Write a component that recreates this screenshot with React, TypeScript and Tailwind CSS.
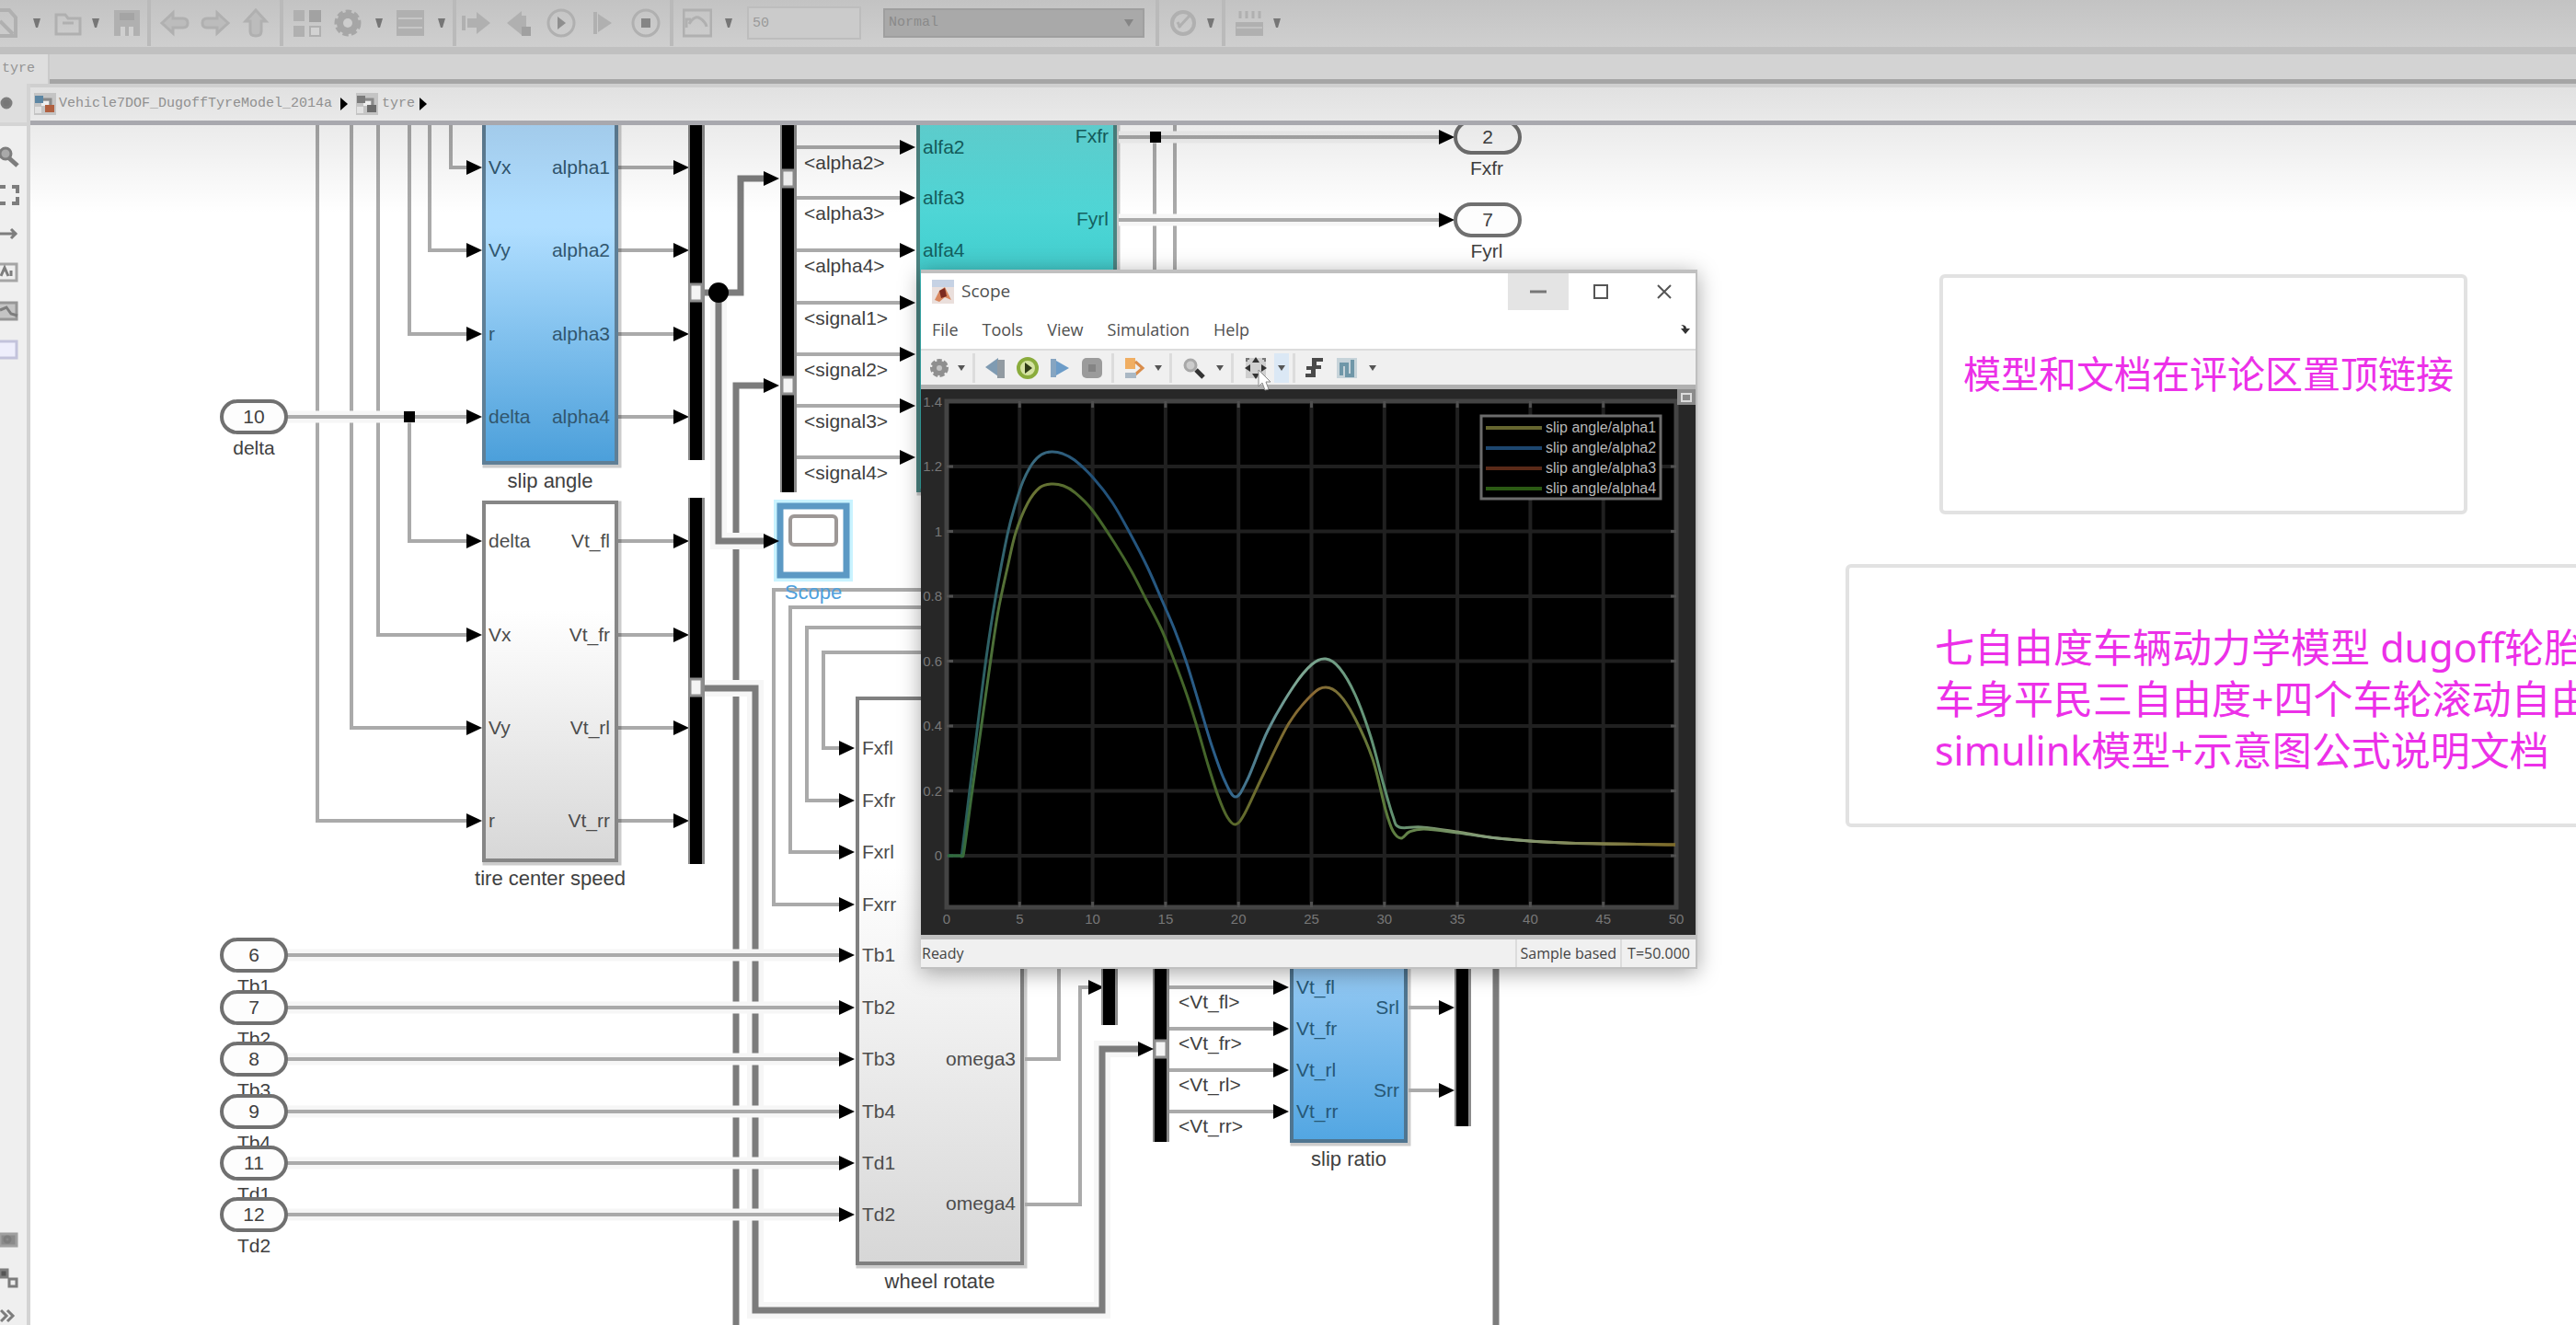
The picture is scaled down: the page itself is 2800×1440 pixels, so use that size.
import { useState } from "react";
import type { ReactNode } from "react";

type Point = [number, number];

type WireProps = {
  d: string;
  bus?: boolean;
  halo?: boolean;
};

type BlockProps = {
  x: number;
  y: number;
  w: number;
  h: number;
  fill: string;
  border: string;
  ink: string;
  label?: string;
  inputs: [string, number][];
  outputs: [string, number][];
};

/* ---------- toolbar ---------- */

const glyphs: Record<string, ReactNode> = {
  page: (
    <>
      <path d="M8 2h12l7 8v20H8z" fill="none" stroke="currentColor" strokeWidth="4" />
      <path d="M10 14l14 14" stroke="currentColor" strokeWidth="4" />
    </>
  ),
  open: <path d="M3 7h10l3 4h13v17H3zM10 16h12" fill="none" stroke="currentColor" strokeWidth="3" />,
  save: (
    <>
      <path d="M2 2h28v28H2z" fill="currentColor" />
      <path d="M9 20h5v10H9zM18 20h5v10h-5z" fill="#cfcfcf" />
      <path d="M8 5h16v8H8z" fill="#a4a4a4" />
    </>
  ),
  back: <path d="M2 16L14 5v6h11q5 0 5 5t-5 5H14v6z" fill="#bcbcbc" stroke="currentColor" strokeWidth="3" />,
  forward: <path d="M30 16L18 5v6H7q-5 0-5 5t5 5h11v6z" fill="#bcbcbc" stroke="currentColor" strokeWidth="3" />,
  up: <path d="M16 2L27 14h-5v11q0 5-6 5t-6-5V14H5z" fill="#bcbcbc" stroke="currentColor" strokeWidth="3" />,
  library: (
    <>
      <path d="M1 2h12v12H1zM1 19h12v12H1z" fill="currentColor" />
      <path d="M18 2h13v13H18z" fill="#a2a2a2" />
      <path d="M19 20h11v10H19z" fill="#d2d2d2" stroke="currentColor" strokeWidth="2" />
    </>
  ),
  gear: (
    <>
      <circle cx="16" cy="16" r="12" fill="#a6a6a6" stroke="#a6a6a6" strokeWidth="5" strokeDasharray="6 3" />
      <circle cx="16" cy="16" r="5" fill="#cdcdcd" />
    </>
  ),
  list: (
    <>
      <path d="M1 2h30v28H1z" fill="currentColor" />
      <path d="M3 11h26M3 21h26" stroke="#c6c6c6" strokeWidth="2" />
    </>
  ),
  stepInto: (
    <>
      <path d="M0 8h4v16H0z" fill="currentColor" />
      <path d="M6 11h10V4l15 12-15 12v-7H6z" fill="currentColor" />
    </>
  ),
  stepBack: (
    <>
      <path d="M3 16L19 3v26z" fill="currentColor" />
      <path d="M19 8h5v20h-5z" fill="currentColor" />
      <path d="M19 20h10v10H19z" fill="#a0a0a0" />
    </>
  ),
  run: (
    <>
      <circle cx="16" cy="16" r="14" fill="none" stroke="currentColor" strokeWidth="3" />
      <path d="M12 9l9 7-9 7z" fill="#8e8e8e" />
    </>
  ),
  stepNext: (
    <>
      <path d="M5 4h4v24H5z" fill="currentColor" />
      <path d="M10 6l15 10-15 10z" fill="currentColor" />
    </>
  ),
  stop: (
    <>
      <circle cx="16" cy="16" r="14" fill="none" stroke="currentColor" strokeWidth="3" />
      <path d="M11 11h10v10H11z" fill="#858585" />
    </>
  ),
  graph: (
    <>
      <path d="M1 2h30v28H1z" fill="none" stroke="currentColor" strokeWidth="3" />
      <path d="M4 21V12h5M7 17q6-10 12-6t7 9" fill="none" stroke="currentColor" strokeWidth="3" />
    </>
  ),
  check: (
    <>
      <circle cx="16" cy="16" r="12" fill="none" stroke="currentColor" strokeWidth="4" />
      <path d="M11 21L23 8M10 15l3 6" fill="none" stroke="currentColor" strokeWidth="3" />
    </>
  ),
  schedule: (
    <>
      <path d="M1 15h30v15H1z" fill="currentColor" />
      <path d="M6 3v8M13 3v8M20 3v8M27 3v8" stroke="currentColor" strokeWidth="3" />
      <path d="M2 21h28" stroke="#c2c2c2" strokeWidth="2" />
    </>
  ),
};

function ToolButton({ name }: { name: string }) {
  return (
    <button type="button" aria-label={name} className="flex h-8 w-9 shrink-0 items-center justify-center text-[#b0b0b0]">
      <svg viewBox="0 0 32 32" className="size-8">
        {glyphs[name]}
      </svg>
    </button>
  );
}

function Caret({ tight = false }: { tight?: boolean }) {
  return (
    <button
      type="button"
      aria-label="More"
      className={tight ? "-ml-1 flex w-4 shrink-0 justify-center" : "flex w-4 shrink-0 justify-center"}
    >
      <svg viewBox="0 0 8 10" className="h-[10px] w-2">
        <path d="M0 0h8L5 10H3z" fill="#767676" />
      </svg>
    </button>
  );
}

function Divider({ className = "" }: { className?: string }) {
  return <span className={`h-[50px] w-1 shrink-0 bg-[#bababa] ${className}`} />;
}

function MainToolbar() {
  const [stopTime, setStopTime] = useState("50");
  return (
    <div className="flex h-[59px] items-start border-b-8 border-[#c0c0c0] bg-linear-to-b from-[#c3c3c3] to-[#cfcfcf]">
      <div className="-ml-3 flex h-[50px] items-center gap-2">
        <ToolButton name="page" />
        <Caret />
        <ToolButton name="open" />
        <Caret tight />
        <ToolButton name="save" />
        <Divider className="-ml-1" />
        <ToolButton name="back" />
        <ToolButton name="forward" />
        <ToolButton name="up" />
        <Divider />
        <ToolButton name="library" />
        <ToolButton name="gear" />
        <Caret />
        <ToolButton name="list" />
        <Caret />
        <Divider className="-mx-1" />
        <div className="flex gap-[10px]">
          <ToolButton name="stepInto" />
          <ToolButton name="stepBack" />
          <ToolButton name="run" />
          <ToolButton name="stepNext" />
          <ToolButton name="stop" />
        </div>
        <Divider />
        <ToolButton name="graph" />
        <Caret />
        <input
          aria-label="Stop time"
          value={stopTime}
          onChange={(e) => setStopTime(e.target.value)}
          className="ml-1 h-9 w-[124px] border-2 border-[#bdbdbd] bg-[#cbcbcb] px-1 font-['Liberation_Mono',monospace] text-[15px] text-[#999999]"
        />
        <div className="relative ml-4 h-8 w-[284px]">
          <select
            aria-label="Simulation mode"
            className="h-full w-full appearance-none border-2 border-[#9f9f9f] bg-[#a9a9a9] px-1 font-['Liberation_Mono',monospace] text-[15px] text-[#8a8a8a]"
          >
            <option>Normal</option>
          </select>
          <svg viewBox="0 0 10 12" className="pointer-events-none absolute top-[10px] right-3 h-3 w-[10px]">
            <path d="M0 2h10L5 10z" fill="#858585" />
          </svg>
        </div>
        <Divider className="ml-1" />
        <ToolButton name="check" />
        <Caret tight />
        <Divider className="-ml-1" />
        <ToolButton name="schedule" />
        <Caret tight />
      </div>
    </div>
  );
}

function ModelIcon({ colored = false }: { colored?: boolean }) {
  return (
    <svg viewBox="0 0 24 24" className="size-6 shrink-0">
      <path d="M0 0h24v24H0z" fill="#c4c4c4" />
      <path d="M8 9h8v5H8z" fill="#eeeeee" />
      <path d="M1 3h9v8H1z" fill={colored ? "#5c86a3" : "#7b7b7b"} />
      <path d="M10 7h8v6" fill="none" stroke="#8a8a8a" strokeWidth="3" />
      <path d="M12 13h10v8H12z" fill={colored ? "#b06040" : "#6c6c6c"} />
      <path d="M1 15h7v7H1z" fill="#e2e2e2" />
    </svg>
  );
}

function Breadcrumb() {
  return (
    <nav className="flex h-9 items-center bg-linear-to-b from-[#e1e1e1] to-[#e9e9e9] pl-1 font-['Liberation_Mono',monospace] text-[15px] text-[#909090]">
      <ModelIcon colored />
      <a href="#model" className="ml-[3px]">Vehicle7DOF_DugoffTyreModel_2014a</a>
      <svg viewBox="0 0 10 14" className="mx-2 h-[14px] w-[10px]">
        <path d="M1 0l8 7-8 7z" />
      </svg>
      <ModelIcon />
      <a href="#tyre" className="ml-1">tyre</a>
      <svg viewBox="0 0 10 14" className="ml-1 h-[14px] w-[10px]">
        <path d="M1 0l8 7-8 7z" />
      </svg>
    </nav>
  );
}

/* ---------- left palette ---------- */

function PaletteButton({ label, children }: { label: string; children: ReactNode }) {
  return (
    <button type="button" aria-label={label} className="flex h-[42px] w-full items-center">
      <svg viewBox="0 0 22 24" className="h-6 w-[22px]" fill="none" stroke="#7d7d7d" strokeWidth="3">
        {children}
      </svg>
    </button>
  );
}

function Palette() {
  return (
    <aside className="flex w-[33px] shrink-0 flex-col justify-between border-r-4 border-[#d3d3d3] bg-[#efefef]">
      <div>
        <div className="border-b-4 border-[#d4d4d4] bg-[#dedede]">
          <PaletteButton label="Hide browser">
            <circle cx="7" cy="12" r="5" fill="#777777" />
          </PaletteButton>
        </div>
        <div className="pt-3">
          <PaletteButton label="Zoom">
            <circle cx="6" cy="9" r="6" fill="#a9a9a9" />
            <path d="M10 14l9 8" strokeWidth="5" />
          </PaletteButton>
          <PaletteButton label="Fit to view">
            <path d="M0 3h6M13 3h6v7M19 14v7h-6M6 21H0" strokeWidth="4" />
          </PaletteButton>
          <PaletteButton label="Signal">
            <path d="M0 12h18M12 7l5 5-5 5" />
          </PaletteButton>
          <PaletteButton label="Annotation">
            <path d="M0 3h18v18H0" stroke="#a5a5a5" />
            <path d="M1 16l4-9 4 9M12 16v-6" />
          </PaletteButton>
          <PaletteButton label="Image">
            <path d="M0 3h18v18H0" stroke="#969696" fill="#c4c4c4" />
            <path d="M0 11l7-3 5 7 7 2" />
          </PaletteButton>
          <PaletteButton label="Area">
            <path d="M0 3h18v18H0" stroke="#c3c3dc" fill="#eeeefc" />
          </PaletteButton>
        </div>
      </div>
      <div className="-mb-3">
        <PaletteButton label="Camera">
          <path d="M0 6h18v13H0z" fill="#8a8a8a" stroke="#a0a0a0" />
          <circle cx="8" cy="12" r="3" />
        </PaletteButton>
        <PaletteButton label="Model data">
          <path d="M0 3h8v8H0z" fill="#555555" />
          <path d="M10 13h8v8h-8z" />
        </PaletteButton>
        <PaletteButton label="Expand">
          <path d="M1 5l6 6-6 6M8 5l6 6-6 6" />
        </PaletteButton>
      </div>
    </aside>
  );
}

/* ---------- block diagram ---------- */

function Wire({ d, bus = false, halo = false }: WireProps) {
  return (
    <>
      {halo && <path d={d} fill="none" stroke="#f6f6f6" strokeWidth={bus ? 18 : 13} />}
      <path d={d} fill="none" stroke={bus ? "#7c7c7c" : "#aaaaaa"} strokeWidth={bus ? 7 : 4} />
    </>
  );
}

function Arrow({ x, y }: { x: number; y: number }) {
  return <path d={`M${x - 17} ${y - 8}L${x} ${y}L${x - 17} ${y + 8}z`} fill="#000" />;
}

function Label({ x, y, text, anchor = "middle", fill = "#404040", size = 21 }: {
  x: number;
  y: number;
  text: string;
  anchor?: "start" | "middle" | "end";
  fill?: string;
  size?: number;
}) {
  return (
    <text x={x} y={y + 7} textAnchor={anchor} fill={fill} fontSize={size}>
      {text}
    </text>
  );
}

function Bar({ x, y, h, port }: { x: number; y: number; h: number; port?: number[] }) {
  return (
    <>
      <rect x={x - 2} y={y} width="18" height={h} fill="#8a8a8a" />
      <rect x={x} y={y} width="13" height={h} fill="#000" />
      {port?.map((p) => (
        <rect key={p} x={x} y={p - 9} width="13" height="18" fill="#f4f4f4" stroke="#8d8d8d" strokeWidth="3" />
      ))}
    </>
  );
}

function Block({ x, y, w, h, fill, border, ink, label, inputs, outputs }: BlockProps) {
  return (
    <g>
      <rect x={x + 2} y={y + 2} width={w} height={h} fill="none" stroke="#00000033" strokeWidth="7" />
      <rect x={x} y={y} width={w} height={h} fill={fill} stroke={border} strokeWidth="4" />
      {inputs.map(([text, py]) => (
        <Label key={text} x={x + 5} y={py} text={text} anchor="start" fill={ink} />
      ))}
      {outputs.map(([text, py]) => (
        <Label key={text} x={x + w - 7} y={py} text={text} anchor="end" fill={ink} />
      ))}
      {label && <Label x={x + w / 2} y={y + h + 20} text={label} size={22} />}
    </g>
  );
}

function Port({ x, y, id }: { x: number; y: number; id: string }) {
  return (
    <>
      <rect x={x} y={y - 17} width="70" height="34" rx="17" fill="#fdfdfd" stroke="#707070" strokeWidth="4" />
      <Label x={x + 35} y={y} text={id} />
    </>
  );
}

const torqueInputs: [string, string, number][] = [
  ["6", "Tb1", 1038],
  ["7", "Tb2", 1095],
  ["8", "Tb3", 1151],
  ["9", "Tb4", 1208],
  ["11", "Td1", 1264],
  ["12", "Td2", 1320],
];

const busSignals: [string, number][] = [
  ["<alpha2>", 160],
  ["<alpha3>", 215],
  ["<alpha4>", 272],
  ["<signal1>", 329],
  ["<signal2>", 385],
  ["<signal3>", 441],
  ["<signal4>", 497],
];

const speedSignals: [string, number][] = [
  ["<Vt_fl>", 1073],
  ["<Vt_fr>", 1118],
  ["<Vt_rl>", 1163],
  ["<Vt_rr>", 1208],
];

function Diagram() {
  return (
    <svg className="absolute inset-0 h-full w-full font-['Liberation_Sans',Arial,sans-serif]">
      <defs>
        <linearGradient id="blueTall" x1="0" y1="0" x2="0" y2="1">
          <stop offset="0" stopColor="#b0dcff" />
          <stop offset="0.35" stopColor="#b0deff" />
          <stop offset="1" stopColor="#4b9fda" />
        </linearGradient>
        <linearGradient id="blueShort" x1="0" y1="0" x2="0" y2="1">
          <stop offset="0" stopColor="#9ccdf5" />
          <stop offset="1" stopColor="#52a6e2" />
        </linearGradient>
        <linearGradient id="teal" x1="0" y1="0" x2="0" y2="1">
          <stop offset="0" stopColor="#6adfdf" />
          <stop offset="0.35" stopColor="#48d3d3" />
          <stop offset="0.5" stopColor="#3fc2c2" />
          <stop offset="1" stopColor="#35a8a4" />
        </linearGradient>
        <linearGradient id="gray" x1="0" y1="0" x2="0" y2="1">
          <stop offset="0.3" stopColor="#ffffff" />
          <stop offset="1" stopColor="#d7d7d7" />
        </linearGradient>
      </defs>

      {/* model coordinates start at the window corner */}
      <g transform="translate(-33 -136)">
        <Wire bus d="M800 1445V419H832" />
        <Wire bus halo d="M762 748H821V1424H1198V1140H1240" />
        <Wire bus halo d="M781 318V588H832" />
        <Wire bus d="M762 318H805V194H832" />
        <circle cx="781" cy="318" r="11" />
        <Wire bus d="M1626 1040V1445" />

        <Wire d="M345 130V892H510" />
        <Wire d="M382 130V791H510" />
        <Wire d="M411 130V690H510" />
        <Wire d="M445 130V363H510" />
        <Wire d="M467 130V272H510" />
        <Wire d="M490 130V182H510" />
        <Wire d="M445 453V588H510" />
        <Wire halo d="M311 453H510" />
        <rect x="439" y="447" width="12" height="12" />
        {[182, 272, 363, 453, 588, 690, 791, 892].map((y) => (
          <g key={y}>
            <Arrow x={524} y={y} />
            <Wire d={`M671 ${y}H740`} />
            <Arrow x={749} y={y} />
          </g>
        ))}

        <Wire d="M1001 641H841V983H915" />
        <Wire d="M1001 660H859V926H915" />
        <Wire d="M1001 682H877V870H915" />
        <Wire d="M1001 709H895V813H915" />
        {[813, 870, 926, 983].map((y) => (
          <Arrow key={y} x={929} y={y} />
        ))}
        {torqueInputs.map(([id, name, y]) => (
          <g key={id}>
            <Wire halo d={`M311 ${y}H915`} />
            <Arrow x={929} y={y} />
            <Label x={276} y={y + 34} text={name} />
          </g>
        ))}
        {torqueInputs.map(([id, , y]) => (
          <Port key={id} x={241} y={y} id={id} />
        ))}
        <Port x={241} y={453} id="10" />
        <Label x={276} y={487} text="delta" />

        <Bar x={750} y={120} h={380} port={[318]} />
        <Bar x={750} y={541} h={398} port={[747]} />
        <Bar x={850} y={120} h={415} port={[194, 419]} />
        <Arrow x={847} y={194} />
        <Arrow x={847} y={419} />
        {busSignals.map(([name, y]) => (
          <g key={name}>
            <Wire d={`M866 ${y}H984`} />
            <Arrow x={995} y={y} />
            <Label x={874} y={y + 17} text={name} anchor="start" />
          </g>
        ))}

        <Block
          x={526} y={110} w={144} h={393} fill="url(#blueTall)" border="#5f7f96" ink="#31566e" label="slip angle"
          inputs={[["Vx", 182], ["Vy", 272], ["r", 363], ["delta", 453]]}
          outputs={[["alpha1", 182], ["alpha2", 272], ["alpha3", 363], ["alpha4", 453]]}
        />
        <Block
          x={526} y={546} w={144} h={389} fill="url(#gray)" border="#868686" ink="#4c4c4c" label="tire center speed"
          inputs={[["delta", 588], ["Vx", 690], ["Vy", 791], ["r", 892]]}
          outputs={[["Vt_fl", 588], ["Vt_fr", 690], ["Vt_rl", 791], ["Vt_rr", 892]]}
        />
        <Block
          x={998} y={110} w={214} h={423} fill="url(#teal)" border="#4c8482" ink="#14605f"
          inputs={[["alfa2", 160], ["alfa3", 215], ["alfa4", 272]]}
          outputs={[["Fxfr", 148], ["Fyrl", 238]]}
        />
        <Block
          x={932} y={759} w={179} h={614} fill="url(#gray)" border="#808080" ink="#4c4c4c" label="wheel rotate"
          inputs={[
            ["Fxfl", 813], ["Fxfr", 870], ["Fxrl", 926], ["Fxrr", 983], ["Tb1", 1038],
            ["Tb2", 1095], ["Tb3", 1151], ["Tb4", 1208], ["Td1", 1264], ["Td2", 1320],
          ]}
          outputs={[["omega3", 1151], ["omega4", 1308]]}
        />

        {/* selected scope block */}
        <rect x="848" y="550" width="72" height="75" fill="#fff" stroke="#c9f3ff" strokeWidth="14" />
        <rect x="848" y="550" width="72" height="75" fill="#fff" stroke="#5c99c4" strokeWidth="7" />
        <rect x="859" y="561" width="50" height="31" rx="4" fill="#fff" stroke="#9d9896" strokeWidth="4" />
        <Label x={884} y={644} text="Scope" fill="#4fa0dc" size={22} />
        <Arrow x={847} y={588} />

        <Wire d="M1255 149V300" />
        <Wire d="M1277 130V300" />
        <Wire halo d="M1216 149H1568" />
        <Wire halo d="M1216 239H1568" />
        <rect x="1250" y="143" width="12" height="12" />
        <Arrow x={1581} y={149} />
        <Arrow x={1581} y={239} />
        <Port x={1582} y={149} id="2" />
        <Port x={1582} y={239} id="7" />
        <Label x={1616} y={183} text="Fxfr" />
        <Label x={1616} y={273} text="Fyrl" />

        <Wire d="M1114 1151H1151V1040" />
        <Wire d="M1114 1309H1174V1073H1184" />
        <Arrow x={1200} y={1073} />
        <Bar x={1199} y={1040} h={74} />
        <Bar x={1255} y={1040} h={201} port={[1140]} />
        <Arrow x={1254} y={1140} />
        {speedSignals.map(([name, y]) => (
          <g key={name}>
            <Wire d={`M1271 ${y}H1388`} />
            <Arrow x={1401} y={y} />
            <Label x={1281} y={y + 16} text={name} anchor="start" />
          </g>
        ))}
        <Block
          x={1404} y={1030} w={124} h={210} fill="url(#blueShort)" border="#4f7590" ink="#275775" label="slip ratio"
          inputs={[["Vt_fl", 1073], ["Vt_fr", 1118], ["Vt_rl", 1163], ["Vt_rr", 1208]]}
          outputs={[["Srl", 1095], ["Srr", 1185]]}
        />
        <Wire d="M1531 1095H1568" />
        <Wire d="M1531 1185H1568" />
        <Arrow x={1581} y={1095} />
        <Arrow x={1581} y={1185} />
        <Bar x={1583} y={1040} h={184} />
      </g>
    </svg>
  );
}

/* ---------- scope window ---------- */

const frontCurve: Point[] = [
  [1030, 931], [1045, 931], [1046, 925], [1054, 860], [1062, 795], [1072, 716], [1082, 651], [1095, 582], [1104, 548],
  [1112, 524], [1122, 505], [1132, 495], [1143, 492], [1155, 494], [1168, 501], [1188, 520], [1209, 547], [1229, 582],
  [1247, 617], [1262, 651], [1277, 686], [1290, 722], [1304, 768], [1317, 811], [1331, 849], [1343, 867], [1356, 848],
  [1378, 795], [1406, 747], [1426, 723], [1441, 717], [1456, 727], [1473, 756], [1490, 802], [1504, 854], [1514, 888],
  [1521, 900], [1545, 900], [1584, 905], [1628, 912], [1700, 917], [1821, 919],
];

const rearCurve: Point[] = [
  [1030, 931], [1046, 931], [1048, 925], [1056, 866], [1066, 795], [1076, 724], [1085, 665], [1095, 618], [1104, 580],
  [1117, 548], [1130, 531], [1143, 527], [1156, 529], [1168, 536], [1187, 555], [1212, 592], [1230, 622], [1245, 651],
  [1262, 684], [1276, 718], [1290, 756], [1302, 794], [1313, 832], [1324, 866], [1334, 889], [1343, 897], [1353, 885],
  [1373, 843], [1401, 787], [1426, 756], [1441, 748], [1456, 756], [1473, 782], [1492, 826], [1506, 881], [1514, 904],
  [1523, 912], [1532, 905], [1548, 902], [1584, 906], [1628, 912], [1700, 917], [1821, 919],
];

function smooth(points: Point[]) {
  let d = `M${points[0][0]} ${points[0][1]}L${points[1][0]} ${points[1][1]}`;
  for (let i = 1; i < points.length - 1; i++) {
    const a = points[i === 1 ? 1 : i - 1];
    const b = points[i];
    const c = points[i + 1];
    const e = points[Math.min(i + 2, points.length - 1)];
    d += `C${b[0] + (c[0] - a[0]) / 6} ${b[1] + (c[1] - a[1]) / 6} ${c[0] - (e[0] - b[0]) / 6} ${c[1] - (e[1] - b[1]) / 6} ${c[0]} ${c[1]}`;
  }
  return d;
}

const xTicks = [0, 5, 10, 15, 20, 25, 30, 35, 40, 45, 50];
const yTicks = ["0", "0.2", "0.4", "0.6", "0.8", "1", "1.2", "1.4"];

const legend = [
  { name: "slip angle/alpha1", color: "#66662f" },
  { name: "slip angle/alpha2", color: "#1d4770" },
  { name: "slip angle/alpha3", color: "#5a2a18" },
  { name: "slip angle/alpha4", color: "#2b5a14" },
];

function ScopePlot() {
  return (
    <svg viewBox="1001 424 842 593" className="block w-full bg-[#272727] font-['Liberation_Sans',Arial,sans-serif]">
      <defs>
        <linearGradient id="front" gradientUnits="userSpaceOnUse" x1="1030" y1="0" x2="1821" y2="0">
          <stop offset="0" stopColor="#24584e" />
          <stop offset="0.12" stopColor="#3a6a80" />
          <stop offset="0.2" stopColor="#215078" />
          <stop offset="0.38" stopColor="#2c5f8a" />
          <stop offset="0.48" stopColor="#7fa894" />
          <stop offset="0.6" stopColor="#5d8f70" />
          <stop offset="0.7" stopColor="#8a9a72" />
          <stop offset="1" stopColor="#a08a3c" />
        </linearGradient>
        <linearGradient id="rear" gradientUnits="userSpaceOnUse" x1="1030" y1="0" x2="1821" y2="0">
          <stop offset="0" stopColor="#2c6a3c" />
          <stop offset="0.12" stopColor="#6b7434" />
          <stop offset="0.2" stopColor="#44652a" />
          <stop offset="0.36" stopColor="#44652a" />
          <stop offset="0.42" stopColor="#6c6c2e" />
          <stop offset="0.5" stopColor="#8c6a34" />
          <stop offset="0.6" stopColor="#5a7a3a" />
          <stop offset="0.75" stopColor="#86a080" />
          <stop offset="1" stopColor="#7c6a28" />
        </linearGradient>
      </defs>
      <rect x="1029" y="437" width="793" height="550" fill="#000" stroke="#444" strokeWidth="5" />
      <g stroke="#202020" strokeWidth="4">
        {xTicks.slice(1, -1).map((t) => (
          <path key={t} d={`M${1029 + t * 15.86} 440V985`} />
        ))}
        {yTicks.slice(0, -1).map((t, i) => (
          <path key={t} d={`M1032 ${931 - i * 70.5}H1819`} />
        ))}
      </g>
      <g stroke="#505050" strokeWidth="3">
        {xTicks.slice(1, -1).map((t) => (
          <path key={t} d={`M${1029 + t * 15.86} 437v7m0 537v6`} />
        ))}
        {yTicks.slice(0, -1).map((t, i) => (
          <path key={t} d={`M1029 ${931 - i * 70.5}h7m780 0h6`} />
        ))}
      </g>
      <path d={smooth(frontCurve)} fill="none" stroke="url(#front)" strokeWidth="3" />
      <path d={smooth(rearCurve)} fill="none" stroke="url(#rear)" strokeWidth="3" />
      <g fill="#777" fontSize="15">
        {xTicks.map((t) => (
          <text key={t} x={1029 + t * 15.86} y="1005" textAnchor="middle">
            {t}
          </text>
        ))}
        {yTicks.map((t, i) => (
          <text key={t} x="1024" y={936 - i * 70.5} textAnchor="end">
            {t}
          </text>
        ))}
      </g>
      <rect x="1610" y="453" width="195" height="90" fill="#000" stroke="#6c6c6c" strokeWidth="3" />
      {legend.map((item, i) => (
        <g key={item.name}>
          <path d={`M1615 ${466 + i * 22}h61`} stroke={item.color} strokeWidth="4" />
          <text x="1680" y={471 + i * 22} fontSize="16" fill="#b8b8b8">
            {item.name}
          </text>
        </g>
      ))}
      <path d="M1823 424h20v17h-20z" fill="#8b8b8b" />
      <path d="M1828 429h10v8h-10z" fill="none" stroke="#ddd" strokeWidth="2" />
    </svg>
  );
}

function ScopeTool({ label, children, width = "w-8" }: { label: string; children: ReactNode; width?: string }) {
  return (
    <button type="button" aria-label={label} className={`flex shrink-0 justify-center ${width}`}>
      <svg viewBox="0 0 24 24" className="size-6">
        {children}
      </svg>
    </button>
  );
}

function ScopeCaret({ active = false }: { active?: boolean }) {
  return (
    <button
      type="button"
      aria-label="More"
      className={
        active
          ? "flex h-8 w-4 shrink-0 items-center justify-center bg-[#dbe8f5]"
          : "flex h-8 w-4 shrink-0 items-center justify-center"
      }
    >
      <svg viewBox="0 0 8 6" className="h-[6px] w-2">
        <path d="M0 0h8L4 6z" fill="#555" />
      </svg>
    </button>
  );
}

function ScopeDivider() {
  return <span className="mx-1 h-8 w-[3px] shrink-0 bg-[#dcdcdc]" />;
}

function ScopeWindow() {
  return (
    <section
      aria-label="Scope"
      className="absolute top-[157px] left-[968px] w-[844px] border-t-4 border-r-2 border-b-2 border-[#c0c0c0] bg-white font-['Open_Sans','Noto_Sans',sans-serif] text-lg text-[#505050] shadow-[0_4px_22px_rgba(0,0,0,0.35)]"
    >
      <header className="flex h-10 items-center pl-3">
        <svg viewBox="0 0 24 26" className="h-[26px] w-6">
          <path d="M0 0h24v26H0z" fill="#eadfdc" />
          <path d="M0 0h24v8H0z" fill="#c6d2e4" />
          <path d="M3 22l5-10 6-4 7 14-7-3-6 5z" fill="#d9875f" />
          <path d="M8 12l6-3 2 9-6 2z" fill="#7c2a20" />
        </svg>
        <h2 className="ml-2 text-[19px]">Scope</h2>
        <div className="ml-auto flex h-full">
          <button type="button" aria-label="Minimize" className="flex w-[66px] items-center justify-center bg-[#e4e4e4]">
            <svg viewBox="0 0 18 18" className="size-[18px]">
              <path d="M0 9h18" stroke="#777" strokeWidth="3" />
            </svg>
          </button>
          <button type="button" aria-label="Maximize" className="flex w-[70px] items-center justify-center">
            <svg viewBox="0 0 18 18" className="size-[18px]">
              <path d="M2 2h14v14H2z" fill="none" stroke="#555" strokeWidth="2" />
            </svg>
          </button>
          <button type="button" aria-label="Close" className="flex w-[68px] items-center justify-center">
            <svg viewBox="0 0 18 18" className="size-[18px]">
              <path d="M2 2l14 14M16 2L2 16" stroke="#555" strokeWidth="2" />
            </svg>
          </button>
        </div>
      </header>

      <nav className="flex h-[42px] items-center gap-[26px] pl-3">
        <button type="button">File</button>
        <button type="button">Tools</button>
        <button type="button">View</button>
        <button type="button">Simulation</button>
        <button type="button">Help</button>
        <svg viewBox="0 0 12 12" className="mr-[5px] ml-auto size-3">
          <path d="M1 1q6 0 6 4h4l-5 6-5-6h3q0-3-3-4z" fill="#333" />
        </svg>
      </nav>

      <div className="flex h-11 items-center border-t-2 border-b-[5px] border-t-[#dcdcdc] border-b-[#b0b0b0] bg-[#f0f0f0] pl-1">
        <ScopeTool label="Settings">
          <circle cx="12" cy="12" r="8" fill="#8f8f8f" stroke="#8f8f8f" strokeWidth="4" strokeDasharray="5 2" />
          <circle cx="12" cy="12" r="3" fill="#c4c4c4" />
        </ScopeTool>
        <ScopeCaret />
        <ScopeDivider />
        <ScopeTool label="Step back" width="w-[35px]">
          <path d="M1 11L15 1v20z" fill="#7f9bb2" />
          <path d="M14 3h8v20h-8z" fill="#919aa1" />
        </ScopeTool>
        <ScopeTool label="Run" width="w-[35px]">
          <circle cx="12" cy="12" r="10" fill="#d5e3a2" stroke="#8aac3c" strokeWidth="4" />
          <path d="M9 6l8 6-8 6z" fill="#2f3b17" />
        </ScopeTool>
        <ScopeTool label="Step forward" width="w-[35px]">
          <path d="M2 2h6v20H2z" fill="#86a5c1" />
          <path d="M8 4l14 8-14 8z" fill="#6c9cc8" />
        </ScopeTool>
        <ScopeTool label="Stop" width="w-[35px]">
          <rect x="1" y="1" width="22" height="22" rx="5" fill="#9b9b9b" />
          <path d="M8 8h8v8H8z" fill="#848484" />
        </ScopeTool>
        <ScopeDivider />
        <ScopeTool label="Highlight block" width="w-9">
          <path d="M2 1h11v12H2z" fill="#f0ae62" />
          <path d="M13 5l8 7-8 7" fill="none" stroke="#d98d4b" strokeWidth="3" />
          <path d="M2 17h12v6H2z" fill="#aab8c4" />
        </ScopeTool>
        <ScopeCaret />
        <ScopeDivider />
        <ScopeTool label="Zoom" width="w-10">
          <circle cx="8" cy="9" r="6" fill="#cccccc" stroke="#a8a8a8" strokeWidth="3" />
          <path d="M14 14l8 8" stroke="#333" strokeWidth="5" />
        </ScopeTool>
        <ScopeCaret />
        <ScopeDivider />
        <ScopeTool label="Scale axes" width="w-10">
          <path d="M1 1h22v22H1z" fill="#cfcfcf" />
          <path d="M12 0l4 6H8zM12 24l4-6H8zM0 12l6-4v8zM24 12l-6-4v8z" fill="#333" />
          <path d="M2 5V2h3M19 2h3v3" fill="none" stroke="#777" strokeWidth="2" />
        </ScopeTool>
        <ScopeCaret active />
        <ScopeDivider />
        <ScopeTool label="Triggers" width="w-8">
          <path d="M10 1h12v4h-7v4h5v4h-6v9H3v-4h6v-4H4v-4h6z" fill="#4a4a4a" />
        </ScopeTool>
        <ScopeTool label="Measurements" width="w-10">
          <path d="M1 1h22v22H1z" fill="#c6d3d9" />
          <path d="M6 20V8h6v12h6V3" fill="none" stroke="#6f97a8" strokeWidth="4" />
        </ScopeTool>
        <ScopeCaret />
      </div>

      <ScopePlot />

      <footer className="flex h-[35px] items-stretch border-t-[5px] border-[#c0c0c0] bg-[#f0f0f0] text-base text-[#444444]">
        <span className="flex items-center px-px">Ready</span>
        <span className="ml-auto flex items-center border-l-2 border-[#dcdcdc] px-1">Sample based</span>
        <span className="flex items-center border-l-2 border-[#dcdcdc] px-[6px]">T=50.000</span>
      </footer>

      {/* mouse pointer over the scale button */}
      <svg viewBox="0 0 16 24" className="absolute top-[104px] left-[366px] h-6 w-4">
        <path d="M1 1l13 13H9l3 8-4 1-3-8-4 4z" fill="#fff" stroke="#888" strokeWidth="1" />
      </svg>
    </section>
  );
}

/* ---------- notes ---------- */

function Notes() {
  return (
    <div className="font-['Noto_Sans','Noto_Sans_CJK_SC',sans-serif] text-[#ec30e8]">
      <p className="absolute top-[162px] left-[2075px] h-[261px] w-[574px] rounded-md border-4 border-[#e2e2e2] bg-white px-[22px] pt-[76px] text-[41px] leading-[56px] whitespace-nowrap">
        模型和文档在评论区置顶链接
      </p>
      <p className="absolute top-[477px] left-[1973px] h-[286px] w-[1000px] rounded-md border-4 border-[#e2e2e2] bg-white px-[93px] pt-[59px] text-[43px] leading-[56px] whitespace-nowrap">
        七自由度车辆动力学模型 dugoff轮胎
        <br />
        车身平民三自由度+四个车轮滚动自由
        <br />
        simulink模型+示意图公式说明文档
      </p>
    </div>
  );
}

export default function App() {
  return (
    <div className="flex h-screen flex-col overflow-hidden bg-white">
      <MainToolbar />
      <div className="flex h-8 shrink-0 border-b-[5px] border-[#a5a5a5] bg-[#d3d3d3]">
        <button
          type="button"
          className="-mb-[5px] w-[54px] border-r-2 border-[#cacaca] bg-[#dedede] pl-[2px] text-left font-['Liberation_Mono',monospace] text-[15px] text-[#949494]"
        >
          tyre
        </button>
      </div>
      <div className="flex min-h-0 flex-1">
        <Palette />
        <main className="flex min-w-0 flex-1 flex-col">
          <div className="border-t-4 border-b-[5px] border-t-[#cfcfcf] border-b-[#a8a8ae]">
            <Breadcrumb />
          </div>
          <div className="relative flex-1 overflow-hidden bg-white">
            <Diagram />
            <div className="pointer-events-none absolute inset-x-0 top-0 h-24 bg-linear-to-b from-black/8 to-transparent" />
            <ScopeWindow />
            <Notes />
          </div>
        </main>
      </div>
    </div>
  );
}
